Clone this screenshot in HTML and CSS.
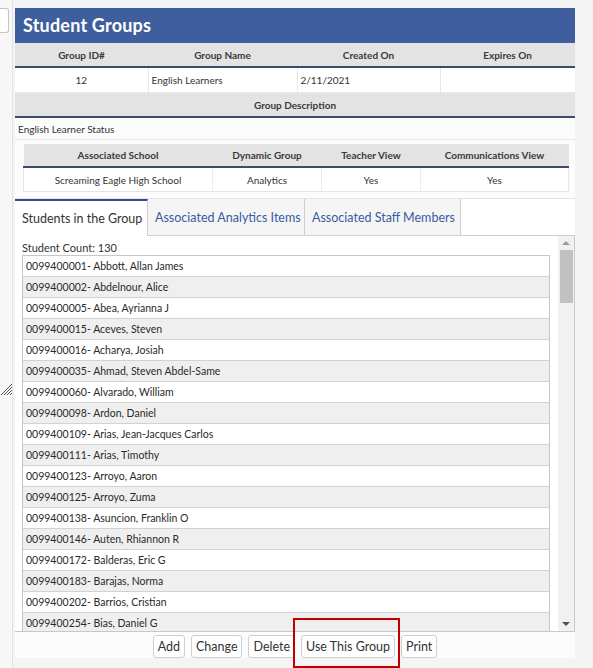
FILE: index.html
```html
<!DOCTYPE html>
<html>
<head>
<meta charset="utf-8">
<link rel="stylesheet" href="styles.css">
</head>
<body>
<div class="page">
  <div class="leftstrip">
    <div class="stub"></div>
    <svg class="grip" width="11" height="11" viewBox="0 0 11 11"><g stroke="#555" stroke-width="1"><line x1="0" y1="11" x2="11" y2="0"/><line x1="3" y1="11" x2="11" y2="3"/><line x1="6" y1="11" x2="11" y2="6"/><line x1="9" y1="11" x2="11" y2="9"/></g></svg>
  </div>
  <div class="panel">
    <div class="title">Student Groups</div>
    <table class="info">
      <tr class="hd"><th class="c1">Group ID#</th><th class="c2">Group Name</th><th class="c3">Created On</th><th class="c4">Expires On</th></tr>
      <tr class="dt"><td class="ctr">12</td><td>English Learners</td><td>2/11/2021</td><td></td></tr>
      <tr class="hd"><th colspan="4">Group Description</th></tr>
      <tr class="desc"><td colspan="4">English Learner Status</td></tr>
    </table>
    <table class="assoc">
      <tr class="hd"><th class="a1">Associated School</th><th class="a2">Dynamic Group</th><th class="a3">Teacher View</th><th class="a4">Communications View</th></tr>
      <tr class="dt"><td>Screaming Eagle High School</td><td>Analytics</td><td>Yes</td><td>Yes</td></tr>
    </table>
    <div class="tabs">
      <div class="tab active">Students in the Group</div>
      <div class="tab">Associated Analytics Items</div>
      <div class="tab">Associated Staff Members</div>
      <div class="tabfill"></div>
    </div>
    <div class="content">
      <div class="scrollarea">
        <div class="count">Student Count: 130</div>
        <div class="list">
          <div class="row">0099400001- Abbott, Allan James</div>
          <div class="row">0099400002- Abdelnour, Alice</div>
          <div class="row">0099400005- Abea, Ayrianna J</div>
          <div class="row">0099400015- Aceves, Steven</div>
          <div class="row">0099400016- Acharya, Josiah</div>
          <div class="row">0099400035- Ahmad, Steven Abdel-Same</div>
          <div class="row">0099400060- Alvarado, William</div>
          <div class="row">0099400098- Ardon, Daniel</div>
          <div class="row">0099400109- Arias, Jean-Jacques Carlos</div>
          <div class="row">0099400111- Arias, Timothy</div>
          <div class="row">0099400123- Arroyo, Aaron</div>
          <div class="row">0099400125- Arroyo, Zuma</div>
          <div class="row">0099400138- Asuncion, Franklin O</div>
          <div class="row">0099400146- Auten, Rhiannon R</div>
          <div class="row">0099400172- Balderas, Eric G</div>
          <div class="row">0099400183- Barajas, Norma</div>
          <div class="row">0099400202- Barrios, Cristian</div>
          <div class="row">0099400254- Bias, Daniel G</div>
        </div>
      </div>
      <div class="scrollbar">
        <div class="arrow up"></div>
        <div class="thumb"></div>
        <div class="track"></div>
        <div class="arrow down"></div>
      </div>
    </div>
    <div class="buttons">
      <button class="btn">Add</button>
      <button class="btn">Change</button>
      <button class="btn">Delete</button>
      <button class="btn">Use This Group</button>
      <button class="btn">Print</button>
    </div>
  </div>
  <div class="highlight"></div>
</div>
</body>
</html>
```
FILE: styles.css
```css
html, body {
  margin: 0;
  padding: 0;
}
body {
  background: #f4f4f4;
  font-family: "Lato", "Open Sans", sans-serif;
  color: #333;
  width: 593px;
  height: 668px;
  overflow: hidden;
}
.page {
  position: relative;
  display: flex;
  align-items: flex-start;
}
.leftstrip {
  width: 12px;
  height: 668px;
  background: #f7f7f7;
  border-right: 1px solid #e2e2e2;
  flex: none;
  display: flex;
  flex-direction: column;
}
.stub {
  margin-top: 8px;
  width: 9px;
  height: 25px;
  box-sizing: border-box;
  background: #fff;
  border: 1px solid #c4c4c4;
  border-left: none;
  border-radius: 0 3px 3px 0;
}
.grip {
  margin-top: 351px;
  margin-left: 1px;
}
.panel {
  margin-left: 2px;
  margin-top: 8px;
  width: 560px;
  background: #fcfcfc;
  flex: none;
  position: relative;
}
.title {
  height: 35px;
  background: #3f5e9e;
  color: #fff;
  font-size: 18px;
  font-weight: 700;
  padding-left: 8px;
  line-height: 34px;
  letter-spacing: 0.2px;
}
table {
  border-collapse: collapse;
  table-layout: fixed;
  font-size: 10px;
}
.info {
  width: 560px;
}
.hd th {
  background: #e3e3e3;
  font-weight: 700;
  color: #3a3a3a;
  border-bottom: 2px solid #3c4b6b;
  text-align: center;
  padding: 0;
}
.info .hd th { height: 23px; }
.c1 { width: 133px; }
.c2 { width: 149px; }
.c3 { width: 143px; }
.c4 { width: 135px; }
.info .dt td {
  height: 24px;
  padding: 0 3px;
  background: #fff;
  border-right: 1px solid #e8e8e8;
  border-bottom: 1px solid #e8e8e8;
}
.info .dt td:last-child { border-right: none; }
.info .dt td.ctr { text-align: center; }
.desc td {
  height: 21px;
  padding: 0 3px;
  border-bottom: 1px solid #e6e6e6;
}
.assoc {
  margin: 4px 7px 0 8px;
  width: 545px;
  font-size: 10px;
}
.assoc .hd th { height: 22px; }
.a1 { width: 189px; }
.a2 { width: 109px; }
.a3 { width: 99px; }
.a4 { width: 148px; }
.assoc .dt td {
  height: 23px;
  padding: 0;
  text-align: center;
  background: #fff;
  border-right: 1px solid #e6edf5;
  border-bottom: 1px solid #e4e4e4;
}
.assoc .dt td:first-child { border-left: 1px solid #e4e4e4; }
.assoc .dt td:last-child { border-right: 1px solid #e4e4e4; }
.tabs {
  display: flex;
  margin-top: 6px;
  height: 37px;
  border-top: 1px solid #e4e4e4;
}
.tab {
  box-sizing: border-box;
  height: 37px;
  padding: 0 7px;
  line-height: 37px;
  font-size: 12.5px;
  color: #3a5ba0;
  background: #f5f5f5;
  border-right: 1px solid #cfcfcf;
  border-bottom: 1px solid #cfcfcf;
  white-space: nowrap;
}
.tab.active {
  color: #333;
  background: #fff;
  border-top: 2px solid #2e4f8f;
  border-bottom: none;
  line-height: 36px;
  width: 133px;
}
.tab:nth-child(2) { width: 157px; }
.tab:nth-child(3) { width: 156px; }
.tabfill {
  flex: 1;
  border-bottom: 1px solid #cfcfcf;
  background: #fff;
}
.content {
  display: flex;
  height: 396px;
  background: #fff;
  border-bottom: 1px solid #c8c8c8;
  border-right: 1px solid #c8c8c8;
  box-sizing: border-box;
}
.scrollarea {
  flex: 1;
  overflow: hidden;
  padding: 4px 8px 0 7px;
}
.count {
  font-size: 11px;
  line-height: 15px;
  color: #333;
}
.list {
  border: 1px solid #c6c6c6;
  border-bottom: none;
}
.row {
  height: 20px;
  line-height: 20px;
  font-size: 10.5px;
  padding-left: 3px;
  border-bottom: 1px solid #d2d2d2;
  background: #fff;
  color: #2a2a2a;
}
.row:nth-child(even) { background: #efefef; }
.scrollbar {
  width: 16px;
  flex: none;
  background: #f1f1f1;
  display: flex;
  flex-direction: column;
  align-items: center;
}
.arrow {
  width: 0;
  height: 0;
  border-left: 4px solid transparent;
  border-right: 4px solid transparent;
  margin: 5px 0;
}
.arrow.up { border-bottom: 4px solid #9a9a9a; }
.arrow.down { border-top: 4px solid #505050; }
.thumb {
  width: 13px;
  height: 53px;
  background: #c1c1c1;
}
.track { flex: 1; }
.buttons {
  display: flex;
  justify-content: center;
  gap: 6px;
  padding-top: 3px;
}
.btn {
  font-family: "Lato", "Open Sans", sans-serif;
  font-size: 12.5px;
  line-height: 20px;
  color: #333;
  background: #fff;
  border: 1px solid #cfcfcf;
  border-radius: 3px;
  height: 23px;
  padding: 0 4px;
  margin: 0;
}
.highlight {
  position: absolute;
  left: 293px;
  top: 618px;
  width: 103px;
  height: 46px;
  border: 2px solid #c00000;
}
```
